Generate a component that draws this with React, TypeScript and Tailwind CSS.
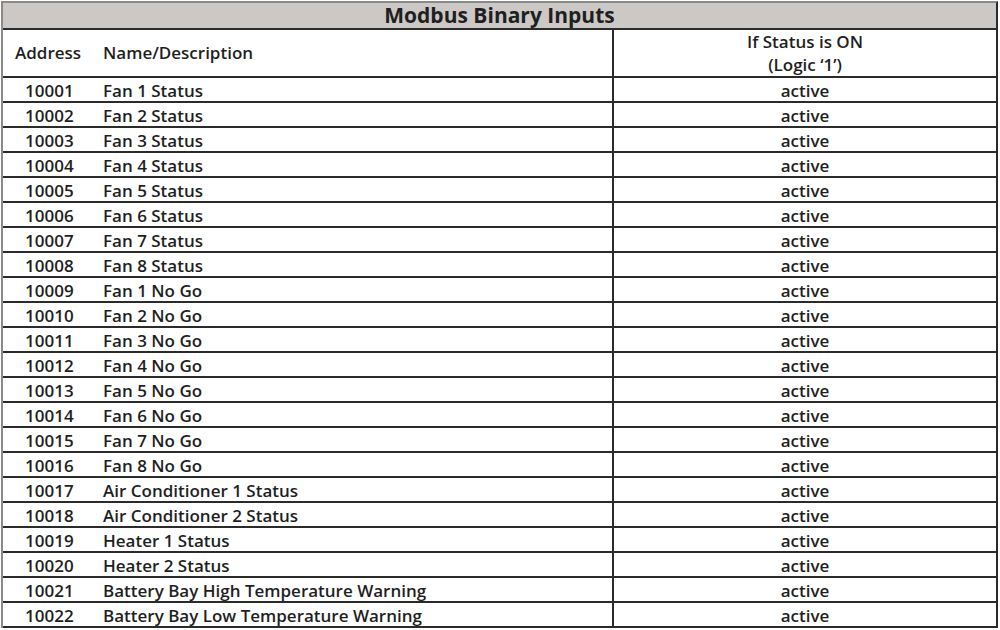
import React from 'react';

const rows: [string, string][] = [
  ['10001', 'Fan 1 Status'],
  ['10002', 'Fan 2 Status'],
  ['10003', 'Fan 3 Status'],
  ['10004', 'Fan 4 Status'],
  ['10005', 'Fan 5 Status'],
  ['10006', 'Fan 6 Status'],
  ['10007', 'Fan 7 Status'],
  ['10008', 'Fan 8 Status'],
  ['10009', 'Fan 1 No Go'],
  ['10010', 'Fan 2 No Go'],
  ['10011', 'Fan 3 No Go'],
  ['10012', 'Fan 4 No Go'],
  ['10013', 'Fan 5 No Go'],
  ['10014', 'Fan 6 No Go'],
  ['10015', 'Fan 7 No Go'],
  ['10016', 'Fan 8 No Go'],
  ['10017', 'Air Conditioner 1 Status'],
  ['10018', 'Air Conditioner 2 Status'],
  ['10019', 'Heater 1 Status'],
  ['10020', 'Heater 2 Status'],
  ['10021', 'Battery Bay High Temperature Warning'],
  ['10022', 'Battery Bay Low Temperature Warning'],
];

export default function App() {
  return (
    <div className="h-[630px] w-[1000px] overflow-hidden bg-white pl-[1px] pt-[1px] text-[#1f1f1f] [font-family:'Open_Sans','Noto_Sans',sans-serif]">
      <div className="w-[997px] border-l-2 border-t-2 border-r-2 border-l-[#8a8a8a] border-t-[#8a8a8a] border-r-[#2b2b2b]">
        <div className="flex h-[27px] items-center justify-center border-b-2 border-[#2b2b2b] bg-[#ccc8c6] text-[21px] font-bold leading-none">
          Modbus Binary Inputs
        </div>
        <div className="flex h-[48px] border-b-2 border-[#2b2b2b] text-[17px] font-semibold">
          <div className="flex w-[611px] items-center border-r-2 border-[#2b2b2b]">
            <span className="w-[100px] pl-[12px]">Address</span>
            <span>Name/Description</span>
          </div>
          <div className="flex flex-1 flex-col items-center justify-center leading-[23px]">
            <span>If Status is ON</span>
            <span>(Logic ‘1’)</span>
          </div>
        </div>
        {rows.map(([addr, name]) => (
          <div key={addr} className="flex h-[25px] border-b-2 border-[#2b2b2b] text-[17px] font-semibold leading-none">
            <div className="flex w-[611px] items-center border-r-2 border-[#2b2b2b] pt-[2px]">
              <span className="w-[100px] pl-[22px]">{addr}</span>
              <span>{name}</span>
            </div>
            <div className="flex flex-1 items-center justify-center pt-[2px]">active</div>
          </div>
        ))}
      </div>
    </div>
  );
}
